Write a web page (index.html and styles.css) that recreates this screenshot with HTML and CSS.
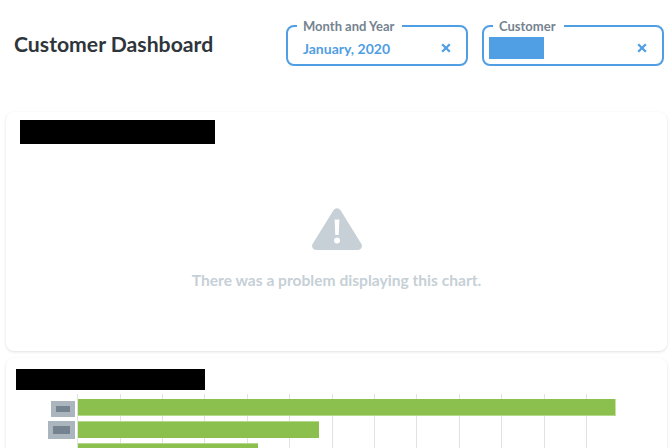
FILE: index.html
```html
<!DOCTYPE html>
<html lang="en">
<head>
<meta charset="utf-8">
<title>Customer Dashboard</title>
<link rel="stylesheet" href="styles.css">
</head>
<body>
<header class="header">
  <h1 class="title">Customer Dashboard</h1>
  <div class="filters">
    <fieldset class="filter">
      <legend class="filter-label">Month and Year</legend>
      <span class="filter-value">January, 2020</span>
      <svg class="clear" viewBox="0 0 10 10" aria-hidden="true"><path d="M1.2 1.2L8.800 8.800M8.800 1.2L1.2 8.800"/></svg>
    </fieldset>
    <fieldset class="filter filter-customer">
      <legend class="filter-label">Customer</legend>
      <span class="redact-blue"></span>
      <svg class="clear" viewBox="0 0 10 10" aria-hidden="true"><path d="M1.2 1.2L8.800 8.800M8.800 1.2L1.2 8.800"/></svg>
    </fieldset>
  </div>
</header>
<main class="cards">
  <section class="card card-error">
    <div class="redact redact-first"></div>
    <div class="error">
      <svg class="warn" viewBox="0 0 50 42" aria-hidden="true">
        <path fill-rule="evenodd" d="M21.6 2.100a4 4 0 0 1 6.800 0l21 34a4 4 0 0 1-3.400 5.900H4a4 4 0 0 1-3.400-5.900zM22.600 11.500l.7 15.500h3.400l.7-15.500zM25 29.500a3 3 0 1 0 0 6 3 3 0 0 0 0-6z"/>
      </svg>
      <p class="error-text">There was a problem displaying this chart.</p>
    </div>
  </section>
  <section class="card card-chart">
    <div class="redact redact-second"></div>
    <div class="chart">
      <div class="gridlines" aria-hidden="true">
        <i></i><i></i><i></i><i></i><i></i><i></i><i></i><i></i><i></i><i></i><i></i><i></i><i></i>
      </div>
      <div class="row">
        <div class="label label-a"><span class="label-inner"></span></div>
        <div class="track"><div class="bar bar-first" style="width:538px"></div></div>
      </div>
      <div class="row">
        <div class="label label-b"><span class="label-inner"></span></div>
        <div class="track"><div class="bar bar-next" style="width:241px"></div></div>
      </div>
      <div class="row">
        <div class="label"></div>
        <div class="track"><div class="bar bar-next" style="width:180px"></div></div>
      </div>
    </div>
  </section>
</main>
</body>
</html>
```
FILE: styles.css
```css
* { box-sizing: border-box; }
html, body { height: 100%; }
body {
  margin: 0;
  overflow: hidden;
  background: #fff;
  font-family: Lato, "Open Sans", sans-serif;
}
.header {
  display: flex;
  align-items: center;
  justify-content: space-between;
  height: 112px;
  padding: 0 7px 24px 14px;
}
.title {
  margin: 0;
  font-size: 21.200px;
  font-weight: 700;
  color: #2e353b;
}
.filters { display: flex; gap: 14px; margin-bottom: 3px; }
.filter {
  display: flex;
  align-items: center;
  justify-content: space-between;
  width: 182px;
  height: 47px;
  margin: 0;
  padding: 0 15px 1px 15px;
  border: 2px solid #509ee3;
  border-radius: 8px;
}
.filter-customer { padding-left: 5px; }
.filter-label {
  margin-left: -6px;
  padding: 0 8px 0 6px;
  font-size: 13px;
  font-weight: 700;
  line-height: 14px;
  color: #74838f;
}
.filter-customer .filter-label { margin-left: 4px; }
.filter-value { font-size: 14px; font-weight: 700; color: #509ee3; }
.redact-blue { width: 55px; height: 22px; background: #509ee3; }
.clear { width: 10px; height: 10px; fill: none; stroke: #509ee3; stroke-width: 2.300; }
.cards {
  display: flex;
  flex-direction: column;
  gap: 7px;
  padding: 0 4px 0 6px;
}
.card {
  flex: none;
  background: #fff;
  border-radius: 8px;
  box-shadow: 0 1px 3px rgba(0, 0, 0, 0.13);
}
.card-error { height: 239px; padding: 8px 14px; }
.card-chart { padding: 11px 10px 0; }
.redact { background: #000; }
.redact-first { width: 195px; height: 24px; }
.redact-second { width: 189px; height: 21px; }
.error {
  display: flex;
  flex-direction: column;
  align-items: center;
  margin-top: 64px;
}
.warn { width: 50px; height: 42px; fill: #c6d0d6; }
.error-text {
  margin: 21px 0 0;
  font-size: 15.600px;
  font-weight: 700;
  line-height: 18px;
  color: #c6d0d6;
}
.chart {
  position: relative;
  display: flex;
  flex-direction: column;
  gap: 5px;
  margin-top: 4px;
  padding-top: 5px;
}
.gridlines {
  position: absolute;
  top: 0;
  bottom: 0;
  left: 61.100px;
  width: 510.040px;
  display: flex;
  justify-content: space-between;
}
.gridlines i { width: 1px; background: #e2e2e2; }
.row { position: relative; display: flex; height: 17px; align-items: center; }
.label {
  flex: none;
  width: 59px;
  display: flex;
  justify-content: flex-end;
}
.label-a > .label-inner { width: 24px; height: 16px; margin-top: 3px; border-width: 5px; }
.label-b > .label-inner { width: 27px; height: 18px; margin-top: 1px; border-width: 5px; }
.label-inner {
  display: block;
  border-style: solid;
  border-color: #abb5be;
  background: #74838f;
}
.track { flex: 1; padding-left: 3px; }
.bar { height: 17px; background: #8bc04f; }
.bar-first { border-bottom: 1px solid #b4d98c; border-right: 1px solid #c4e2a2; }
.bar-next { border-top: 1px solid #b4d98c; }
```
